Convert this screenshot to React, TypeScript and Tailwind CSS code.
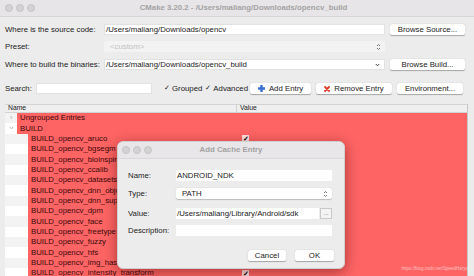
import React from "react";

const Lights = () => (
   <div className="flex gap-[3px]">
      <span className="w-[8px] h-[8px] rounded-full bg-[#d3d3d3] border border-[#c4c4c4]" />
      <span className="w-[8px] h-[8px] rounded-full bg-[#d3d3d3] border border-[#c4c4c4]" />
      <span className="w-[8px] h-[8px] rounded-full bg-[#d3d3d3] border border-[#c4c4c4]" />
   </div>
);

const Stepper = () => (
   <svg width="5" height="8" viewBox="0 0 5 8" fill="none" stroke="#666" strokeWidth="0.9">
      <path d="M1 3 L2.5 1.5 L4 3" />
      <path d="M1 5 L2.5 6.5 L4 5" />
   </svg>
);

const Chevron = () => (
   <svg width="5" height="4" viewBox="0 0 5 4" fill="none" stroke="#444" strokeWidth="1">
      <path d="M0.8 1 L2.5 2.8 L4.2 1" />
   </svg>
);

const Btn: React.FC<{ className?: string; children: React.ReactNode }> = ({ className, children }) => (
   <div
      className={
         "h-[11px] flex items-center justify-center gap-[4px] bg-white rounded-[2px] shadow-[0_0.5px_1px_rgba(0,0,0,0.3)] text-[#222] " +
         (className ?? "")
      }
   >
      {children}
   </div>
);

const Check = () => (
   <div className="w-[7px] h-[7px] bg-white/80 flex items-center justify-center">
      <span className="text-[7px] leading-none font-bold text-black">✓</span>
   </div>
);

// rows hidden behind the dialog are clipped at its left edge
const children = [
   { name: "aruco", hidden: false },
   { name: "bgsegm", hidden: true },
   { name: "bioinspired", hidden: true },
   { name: "ccalib", hidden: true },
   { name: "datasets", hidden: true },
   { name: "dnn_objdetect", hidden: true },
   { name: "dnn_superres", hidden: true },
   { name: "dpm", hidden: true },
   { name: "face", hidden: true },
   { name: "freetype", hidden: true },
   { name: "fuzzy", hidden: true },
   { name: "hfs", hidden: true },
   { name: "img_hash", hidden: true },
   { name: "intensity_transform", hidden: false },
];

export default function App() {
   return (
      <div className="w-[474px] h-[276px] overflow-hidden relative bg-[#ececec] font-['Liberation_Sans',Arial,sans-serif] text-[7.8px] text-[#222]">
         {/* title bar */}
         <div className="h-[17px] flex items-center relative bg-[#e7e5e7] border-b border-[#d6d6d6]">
            <div className="pl-[5px]">
               <Lights />
            </div>
            <div className="flex-1 text-center font-bold text-[#a3a3a3] pr-[30px] pl-[8px]">
               CMake 3.20.2 - /Users/maliang/Downloads/opencv_build
            </div>
         </div>

         {/* form */}
         <div className="pl-[5px] pr-[9px]">
            <div className="h-[11px] mt-[7px] flex items-center">
               <div className="w-[99px]">Where is the source code:</div>
               <div className="w-[281px] h-[11px] bg-white flex items-center pl-[1px] border border-[#e2e2e2]">
                  /Users/maliang/Downloads/opencv
               </div>
               <Btn className="ml-[5px] w-[75px]">Browse Source...</Btn>
            </div>
            <div className="h-[11px] mt-[6px] flex items-center">
               <div className="w-[99px]">Preset:</div>
               <div className="w-[281px] h-[11px] bg-[#f3f3f3] flex items-center justify-between pl-[6px] pr-[4px] rounded-[2px]">
                  <span className="text-[#c2c2c2]">&lt;custom&gt;</span>
                  <Stepper />
               </div>
            </div>
            <div className="h-[11px] mt-[7px] flex items-center">
               <div className="w-[99px]">Where to build the binaries:</div>
               <div className="w-[281px] h-[11px] bg-white flex items-center justify-between pl-[1px] pr-[4px] border border-[#e2e2e2]">
                  <span>/Users/maliang/Downloads/opencv_build</span>
                  <Chevron />
               </div>
               <Btn className="ml-[5px] w-[75px]">Browse Build...</Btn>
            </div>
            <div className="h-[11px] mt-[13px] flex items-center">
               <div className="w-[31px]">Search:</div>
               <div className="w-[116px] h-[11px] bg-white border border-[#e2e2e2]" />
               <div className="ml-[12px] flex items-center gap-[2px]">
                  <span className="text-[7px]">✓</span>
                  <span>Grouped</span>
                  <span className="text-[7px] ml-[1px]">✓</span>
                  <span>Advanced</span>
               </div>
               <Btn className="ml-[2px] w-[61px]">
                  <svg width="7" height="7" viewBox="0 0 7 7">
                     <path d="M3.5 0.5 V6.5 M0.5 3.5 H6.5" stroke="#3b6fd4" strokeWidth="2.4" strokeLinecap="round" />
                  </svg>
                  <span>Add Entry</span>
               </Btn>
               <Btn className="ml-[5px] w-[76px]">
                  <svg width="6" height="6" viewBox="0 0 6 6">
                     <path d="M1 1 L5 5 M5 1 L1 5" stroke="#e0392b" strokeWidth="1.8" strokeLinecap="round" />
                  </svg>
                  <span>Remove Entry</span>
               </Btn>
               <Btn className="ml-[5px] w-[66px]">Environment...</Btn>
            </div>
         </div>

         {/* table */}
         <div className="ml-[5px] w-[463px] mt-[10px] border-r border-[#c8c8c8]">
            <div className="h-[9px] flex bg-[#efefef] border-t border-b border-[#d3d3d3] text-[6.8px] leading-none">
               <div className="w-[232px] pl-[3px] flex items-center border-r border-[#d3d3d3]">Name</div>
               <div className="flex-1 pl-[3px] flex items-center">Value</div>
            </div>

            <div className="h-[10.33px] flex bg-[#f3f3f3] items-center">
               <div className="w-[12px] pl-[5px] text-[#aaa] text-[7px]">›</div>
               <div className="flex-1 h-full bg-[#fe6464] text-[#3a0808] pl-[3px] flex items-center">
                  Ungrouped Entries
               </div>
            </div>
            <div className="h-[10.33px] flex bg-white items-center">
               <div className="w-[12px] pl-[4px] flex items-center">
                  <svg width="5" height="4" viewBox="0 0 5 4" fill="none" stroke="#aaa" strokeWidth="0.9">
                     <path d="M0.8 1 L2.5 2.8 L4.2 1" />
                  </svg>
               </div>
               <div className="flex-1 h-full bg-[#fe6464] text-[#3a0808] pl-[3px] flex items-center">BUILD</div>
            </div>
            {children.map((c, i) => (
               <div key={c.name} className={"h-[10.33px] flex " + (i % 2 === 0 ? "bg-[#f3f3f3]" : "bg-white")}>
                  <div className="w-[23px]" />
                  <div className="flex-1 h-full bg-[#fe6464] text-[#3a0808] flex items-center">
                     <div className="w-[209px] pl-[3px]">
                        <div className={"overflow-hidden whitespace-nowrap " + (c.hidden ? "w-[86px]" : "w-full")}>
                           BUILD_opencv_{c.name}
                        </div>
                     </div>
                     {!c.hidden && (
                        <div className="pl-[5px]">
                           <Check />
                        </div>
                     )}
                  </div>
               </div>
            ))}
         </div>

         <div className="absolute right-[6px] bottom-[3px] text-[4.5px] text-white/60">
            https://blog.csdn.net/SpeedHaryo
         </div>

         {/* dialog */}
         <div className="absolute left-[117px] top-[141px] w-[228px] h-[128px] bg-[#ececec] rounded-[6px] overflow-hidden shadow-[0_3px_14px_rgba(60,0,0,0.45)] border border-[#cfcfcf]">
            <div className="h-[17px] flex items-center relative border-b border-[#d8d8d8] bg-[#e8e6e8]">
               <div className="pl-[4px]">
                  <Lights />
               </div>
               <div className="absolute inset-0 flex items-center justify-center font-bold text-[#a3a3a3]">
                  Add Cache Entry
               </div>
            </div>
            <div className="pl-[10px]">
               <div className="h-[11px] mt-[11px] flex items-center">
                  <div className="w-[48px]">Name:</div>
                  <div className="w-[156px] h-[11px] bg-white flex items-center pl-[1px]">ANDROID_NDK</div>
               </div>
               <div className="h-[11px] mt-[7px] flex items-center">
                  <div className="w-[48px]">Type:</div>
                  <div className="w-[156px] h-[11px] bg-white flex items-center justify-between pl-[6px] pr-[4px] rounded-[2px] shadow-[0_0.5px_1px_rgba(0,0,0,0.2)]">
                     <span>PATH</span>
                     <Stepper />
                  </div>
               </div>
               <div className="h-[11px] mt-[9px] flex items-center">
                  <div className="w-[48px]">Value:</div>
                  <div className="w-[143px] h-[11px] bg-white flex items-center pl-[1px] whitespace-nowrap overflow-hidden">
                     /Users/maliang/Library/Android/sdk
                  </div>
                  <div className="ml-[1px] w-[12px] h-[11px] bg-[#f4f4f4] border border-[#c9c9c9] flex items-center justify-center text-[6px] text-[#666]">
                     ...
                  </div>
               </div>
               <div className="h-[11px] mt-[6px] flex items-center">
                  <div className="w-[48px]">Description:</div>
                  <div className="w-[156px] h-[11px] bg-white" />
               </div>
               <div className="h-[11px] mt-[14px] flex items-center">
                  <Btn className="ml-[120px] w-[38px]">Cancel</Btn>
                  <Btn className="ml-[9px] w-[39px]">OK</Btn>
               </div>
            </div>
         </div>
      </div>
   );
}
